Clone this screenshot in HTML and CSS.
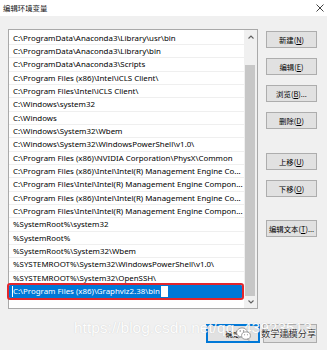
FILE: index.html
```html
<!DOCTYPE html>
<html lang="zh-CN">
<head>
<meta charset="utf-8">
<title>编辑环境变量</title>
<link rel="stylesheet" href="styles.css">
</head>
<body>
<div class="dialog">
  <div class="titlebar">
    <span class="title">编辑环境变量</span>
    <svg class="close" width="8" height="8" viewBox="0 0 8 8"><path d="M0.5 0.5 L7.5 7.5 M7.5 0.5 L0.5 7.5" stroke="#111" stroke-width="0.8" fill="none"/></svg>
  </div>
  <div class="main">
    <div class="list">
      <div class="rows">
        <div class="row">C:\ProgramData\Anaconda3\Library\usr\bin</div>
        <div class="row">C:\ProgramData\Anaconda3\Library\bin</div>
        <div class="row">C:\ProgramData\Anaconda3\Scripts</div>
        <div class="row">C:\Program Files (x86)\Intel\iCLS Client\</div>
        <div class="row">C:\Program Files\Intel\iCLS Client\</div>
        <div class="row">C:\Windows\system32</div>
        <div class="row">C:\Windows</div>
        <div class="row">C:\Windows\System32\Wbem</div>
        <div class="row">C:\Windows\System32\WindowsPowerShell\v1.0\</div>
        <div class="row">C:\Program Files (x86)\NVIDIA Corporation\PhysX\Common</div>
        <div class="row">C:\Program Files (x86)\Intel\Intel(R) Management Engine Co...</div>
        <div class="row">C:\Program Files\Intel\Intel(R) Management Engine Compon...</div>
        <div class="row">C:\Program Files (x86)\Intel\Intel(R) Management Engine Co...</div>
        <div class="row">C:\Program Files\Intel\Intel(R) Management Engine Compon...</div>
        <div class="row">%SystemRoot%\system32</div>
        <div class="row">%SystemRoot%</div>
        <div class="row">%SystemRoot%\System32\Wbem</div>
        <div class="row">%SYSTEMROOT%\System32\WindowsPowerShell\v1.0\</div>
        <div class="row">%SYSTEMROOT%\System32\OpenSSH\</div>
        <div class="row sel"><span class="edit"><span class="hl">C:\Program Files (x86)\Graphviz2.38\bin</span></span></div>
      </div>
      <div class="scrollbar">
        <div class="sb-btn"><svg width="6" height="4" viewBox="0 0 6 4"><polyline points="0.5,3.5 3,1 5.5,3.5" fill="none" stroke="#606060" stroke-width="1.1"/></svg></div>
        <div class="sb-gap"></div>
        <div class="sb-thumb"></div>
        <div class="sb-btn down"><svg width="6" height="4" viewBox="0 0 6 4"><polyline points="0.5,0.5 3,3 5.5,0.5" fill="none" stroke="#606060" stroke-width="1.1"/></svg></div>
      </div>
    </div>
    <div class="side">
      <div class="btn">新建(<u>N</u>)</div>
      <div class="btn">编辑(<u>E</u>)</div>
      <div class="btn">浏览(<u>B</u>)...</div>
      <div class="btn">删除(<u>D</u>)</div>
      <div class="btn gap-lg">上移(<u>U</u>)</div>
      <div class="btn">下移(<u>O</u>)</div>
      <div class="btn gap-md">编辑文本(<u>T</u>)...</div>
    </div>
  </div>
  <div class="footer">
    <div class="btn wide default">确定</div>
    <div class="btn wide">取消</div>
  </div>
  <div class="wm-url">https://blog.csdn.net/qq_43923513</div>
  <svg class="wm-icon" width="15" height="14" viewBox="0 0 15 14">
    <ellipse cx="6" cy="5.5" rx="5.4" ry="4.6" fill="#fff" stroke="#8a8a8a" stroke-width="0.8"/>
    <path d="M2.6 9 L2 11.4 L4.6 9.8 Z" fill="#fff" stroke="#8a8a8a" stroke-width="0.6"/>
    <ellipse cx="10" cy="8.6" rx="4.4" ry="3.7" fill="#fff" stroke="#8a8a8a" stroke-width="0.8"/>
    <path d="M12.4 11.6 L13.2 13.4 L11 12.2 Z" fill="#fff" stroke="#8a8a8a" stroke-width="0.6"/>
    <circle cx="4.2" cy="4" r="0.7" fill="#777"/>
    <circle cx="7.6" cy="4" r="0.7" fill="#777"/>
    <circle cx="8.6" cy="7.8" r="0.55" fill="#777"/>
    <circle cx="11.4" cy="7.8" r="0.55" fill="#777"/>
  </svg>
  <div class="wm-name">数学建模分享</div>
</div>
</body>
</html>
```

FILE: styles.css
```css
html, body {
  margin: 0;
  padding: 0;
}
body {
  background: #f0f0f0;
  font-family: "Noto Sans", "Noto Sans CJK SC", sans-serif;
  color: #000;
}
.dialog {
  position: relative;
  width: 327px;
  height: 350px;
  overflow: hidden;
  background: #f0f0f0;
}
.titlebar {
  height: 16px;
  background: #fff;
  display: flex;
  align-items: center;
  justify-content: space-between;
  padding: 0 3px 0 3px;
}
.title {
  font-family: "Noto Sans CJK SC", sans-serif;
  font-size: 7.4px;
  color: #111;
  line-height: 16px;
}
.close {
  display: block;
}
.main {
  display: flex;
  padding: 13px 0 0 8px;
}
.list {
  box-sizing: border-box;
  width: 250px;
  height: 280px;
  border: 1px solid #a9a9a9;
  background: #fff;
  display: flex;
}
.rows {
  flex: 1;
  padding-top: 1.7px;
  min-width: 0;
}
.row {
  box-sizing: border-box;
  height: 13.33px;
  line-height: 12.6px;
  padding-left: 4px;
  border-bottom: 1px solid #efefef;
  font-size: 7.9px;
  white-space: nowrap;
  overflow: hidden;
}
.row.sel {
  background: #0078d7;
  outline: 2px solid #e3262c;
  border-radius: 1px;
  border-bottom-color: #0078d7;
  padding-left: 3px;
  padding-top: 0.6px;
  overflow: visible;
  margin-right: 2px;
}
.edit {
  display: inline-block;
  box-sizing: border-box;
  width: 156px;
  height: 11.8px;
  background: #fff;
  padding-left: 1px;
  line-height: 11.8px;
  vertical-align: top;
}
.hl {
  background: #0078d7;
  color: #fff;
  display: inline-block;
  line-height: 11.4px;
  padding-right: 1px;
}
.scrollbar {
  width: 13px;
  background: #f0f0f0;
  display: flex;
  flex-direction: column;
}
.sb-btn {
  height: 13px;
  display: flex;
  align-items: center;
  justify-content: center;
}
.sb-btn.down {
  height: 12px;
}
.sb-gap {
  height: 22px;
}
.sb-thumb {
  flex: 1;
  background: #c7c7c7;
  margin: 0 2px 0 1px;
}
.side {
  display: flex;
  flex-direction: column;
  margin-left: 8px;
  padding-top: 1.7px;
}
.btn {
  box-sizing: border-box;
  width: 51px;
  height: 17px;
  background: #e1e1e1;
  border: 1px solid #adadad;
  font-family: "Noto Sans CJK SC", sans-serif;
  font-size: 7.4px;
  display: flex;
  align-items: center;
  justify-content: center;
  margin-bottom: 10px;
  white-space: nowrap;
}
.btn u {
  text-decoration-thickness: 0.6px;
  text-underline-offset: 1px;
}
.btn.gap-lg {
  margin-top: 14.6px;
}
.btn.gap-md {
  margin-top: 13px;
}
.footer {
  display: flex;
  justify-content: flex-end;
  gap: 3px;
  padding: 15px 10px 0 0;
}
.btn.wide {
  width: 54px;
  height: 19px;
  margin-bottom: 0;
}
.btn.default {
  border: 1px solid #0078d7;
  box-shadow: inset 0 0 0 1px #0078d7;
}
.wm-url {
  position: absolute;
  left: 74px;
  top: 319px;
  font-family: "Liberation Sans", sans-serif;
  font-size: 15.5px;
  color: #fff;
  white-space: nowrap;
  text-shadow: 0 0 1px rgba(120, 120, 120, 0.35);
  opacity: 0.9;
}
.wm-icon {
  position: absolute;
  left: 236px;
  top: 327px;
}
.wm-name {
  position: absolute;
  left: 261px;
  top: 327px;
  font-family: "Noto Sans CJK SC", sans-serif;
  font-size: 9.2px;
  line-height: 13px;
  color: #333;
  white-space: nowrap;
  text-shadow: 0 0 1px #fff, 0 0 1px #fff, 0 0 2px #fff;
}
```
